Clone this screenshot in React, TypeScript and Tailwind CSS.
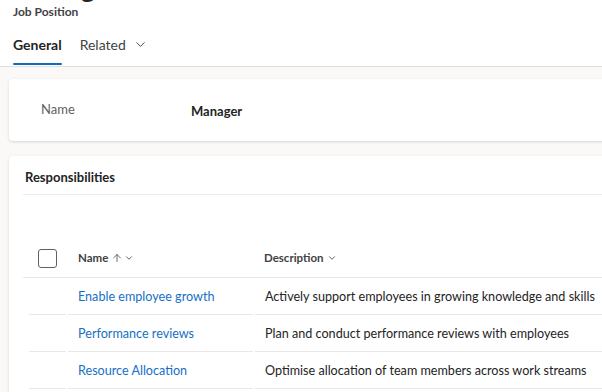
import { ArrowUp, ChevronDown } from 'lucide-react';

const rows = [
  { name: 'Enable employee growth', description: 'Actively support employees in growing knowledge and skills' },
  { name: 'Performance reviews', description: 'Plan and conduct performance reviews with employees' },
  { name: 'Resource Allocation', description: 'Optimise allocation of team members across work streams' },
];

export default function App() {
  return (
    <div
      className="w-[602px] h-[392px] overflow-hidden bg-white text-[#242424]"
      style={{ fontFamily: '"Segoe UI", Lato, "Noto Sans", sans-serif' }}
    >
      <div className="w-[760px]">
        {/* Header */}
        <div className="px-[13px]">
          <h1 className="text-[27px] font-bold leading-[32px] mt-[-28px] h-[32px]">Manager</h1>
          <div className="text-[12px] font-bold leading-[16px] text-[#424242]">Job Position</div>
          {/* Tabs */}
          <div className="flex items-end gap-[18px] mt-[6px] h-[40px]">
            <div className="relative h-full flex items-center pb-[4px]">
              <span className="text-[14px] font-bold">General</span>
              <span className="absolute left-0 right-0 bottom-[1px] h-[2px] rounded-full bg-[#0f6cbd]" />
            </div>
            <div className="h-full flex items-center gap-[7px] pb-[4px] text-[14px] text-[#424242]">
              Related
              <ChevronDown size={15} strokeWidth={1.5} />
            </div>
          </div>
        </div>
        <div className="h-px bg-[#e0e0e0]" />

        {/* Body */}
        <div className="bg-[#faf9f8] px-[9px] pt-[12px] pb-[20px] flex flex-col gap-[15px]">
          <div className="bg-white rounded-[4px] shadow-[0_1px_3px_rgba(0,0,0,0.14)] h-[62px] flex items-center pl-[32px] pt-[4px] text-[13px]">
            <span className="w-[150px] text-[#616161] mt-[-4px]">Name</span>
            <span className="font-bold">Manager</span>
          </div>

          <div className="bg-white rounded-[4px] shadow-[0_1px_3px_rgba(0,0,0,0.14)] px-[14px] pt-[12px] pb-[10px]">
            <div className="text-[13px] font-bold px-[2px] pb-[6px] border-b border-[#edebe9]">Responsibilities</div>
            <div className="h-[43px]" />
            <div className="text-[12.6px]">
              <div className="flex h-[40px] items-center pt-[2px] border-b border-[#e8e8e8]">
                <div className="w-[44px] flex justify-end pr-[10px]">
                  <span className="w-[19px] h-[19px] rounded-[3px] border border-[#616161]" />
                </div>
                <div className="w-[187px] pl-[11px] flex items-center gap-[2px] text-[11.5px] font-bold text-[#424242]">
                  Name
                  <ArrowUp size={12} strokeWidth={1.5} className="ml-[1px]" />
                  <ChevronDown size={10} strokeWidth={2} className="ml-[-1px]" />
                </div>
                <div className="pl-[10px] flex items-center gap-[3px] text-[11.5px] font-bold text-[#424242]">
                  Description
                  <ChevronDown size={10} strokeWidth={2} />
                </div>
              </div>
              {rows.map((r) => (
                <div key={r.name} className="flex h-[37px] gap-[2px] pl-[6px]">
                  <div className="w-[37px] border-b border-[#e8e8e8]" />
                  <div className="w-[185px] flex items-center pl-[10px] pt-[4px] border-b border-[#e8e8e8] text-[#1570c6]">{r.name}</div>
                  <div className="flex-1 flex items-center pl-[10px] pt-[4px] border-b border-[#e8e8e8]">{r.description}</div>
                </div>
              ))}
            </div>
          </div>
        </div>
      </div>
    </div>
  );
}
